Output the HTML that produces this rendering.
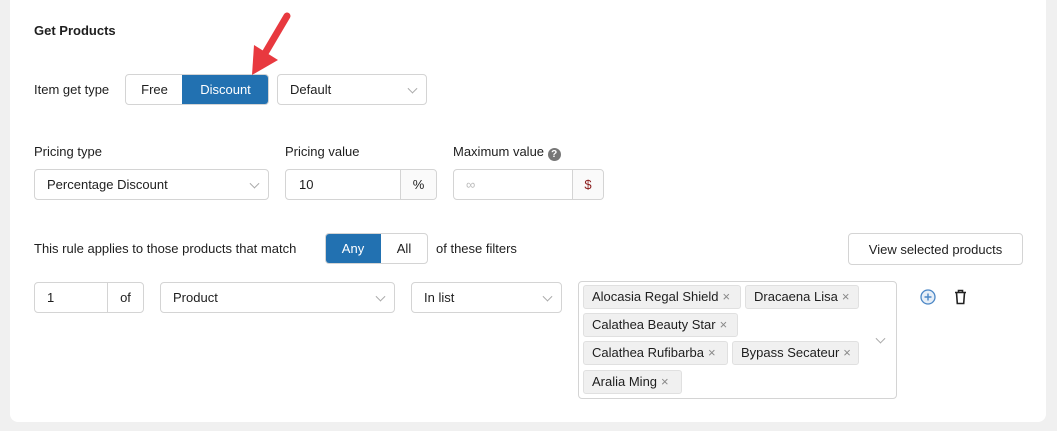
<!DOCTYPE html><html><head><style>
body{margin:0;width:1057px;height:431px;background:#f0f0f0;font-family:"Liberation Sans",sans-serif;font-size:13px;color:#1e1e1e;position:relative;overflow:hidden}
.p{position:absolute;left:10px;top:0;width:1036px;height:422px;background:#fff;border-radius:0 0 8px 8px}
.a{position:absolute}
.b{position:absolute;border:1px solid #d4d4d4;border-radius:4px;box-sizing:border-box;background:#fff;display:flex;align-items:center}
.chev{position:absolute;right:10px;top:50%;width:6px;height:6px;border-right:1px solid #aaa;border-bottom:1px solid #aaa;transform:translateY(-70%) rotate(45deg)}
.add{position:absolute;right:0;top:0;bottom:0;border-left:1px solid #d4d4d4;background:#fafafa;display:flex;align-items:center;justify-content:center;border-radius:0 4px 4px 0}
.tag{position:absolute;height:24px;background:#f0f0f0;border:1px solid #e0e0e0;border-radius:3px;box-sizing:border-box;padding:0 8px;line-height:22px;white-space:nowrap}
.tag span{color:#888;margin-left:4px}
</style></head><body>
<div class="p"></div>
<div class="a" style="left:34px;top:23px;font-weight:bold">Get Products</div>
<div class="a" style="left:34px;top:82px">Item get type</div>
<div class="b" style="left:125px;top:74px;width:144px;height:31px;overflow:hidden">
<div style="width:57px;text-align:center">Free</div>
<div style="position:absolute;left:56px;top:-1px;bottom:-1px;right:-1px;background:#2271b1;color:#fff;display:flex;align-items:center;justify-content:center">Discount</div></div>
<div class="b" style="left:277px;top:74px;width:150px;height:31px;padding-left:12px">Default<i class="chev"></i></div>
<div class="a" style="left:34px;top:144px">Pricing type</div>
<div class="a" style="left:285px;top:144px">Pricing value</div>
<div class="a" style="left:453px;top:144px">Maximum value <span style="display:inline-block;width:13px;height:13px;border-radius:50%;background:#777;color:#fff;font-size:10px;text-align:center;line-height:13px;font-weight:bold;vertical-align:-1px">?</span></div>
<div class="b" style="left:34px;top:169px;width:235px;height:31px;padding-left:12px">Percentage Discount<i class="chev"></i></div>
<div class="b" style="left:285px;top:169px;width:152px;height:31px;padding-left:13px">10<div class="add" style="width:35px">%</div></div>
<div class="b" style="left:453px;top:169px;width:151px;height:31px;padding-left:12px;color:#bbb">∞<div class="add" style="width:30px;color:#8a1c1c">$</div></div>
<div class="a" style="left:34px;top:241px">This rule applies to those products that match</div>
<div class="b" style="left:325px;top:233px;width:103px;height:31px;overflow:hidden">
<div style="position:absolute;left:-1px;top:-1px;bottom:-1px;width:56px;background:#2271b1;color:#fff;display:flex;align-items:center;justify-content:center">Any</div>
<div style="position:absolute;left:55px;right:0;text-align:center">All</div></div>
<div class="a" style="left:436px;top:241px">of these filters</div>
<div class="b" style="left:848px;top:233px;width:175px;height:32px;justify-content:center">View selected products</div>
<div class="b" style="left:34px;top:282px;width:110px;height:31px;padding-left:12px">1<div class="add" style="width:35px;background:#fff">of</div></div>
<div class="b" style="left:160px;top:282px;width:235px;height:31px;padding-left:12px">Product<i class="chev"></i></div>
<div class="b" style="left:411px;top:282px;width:151px;height:31px;padding-left:12px">In list<i class="chev"></i></div>
<div class="b" style="left:578px;top:281px;width:319px;height:118px"><i class="chev" style="right:12px"></i></div>
<div class="tag" style="left:583px;top:285px;width:158px">Alocasia Regal Shield<span>×</span></div>
<div class="tag" style="left:745px;top:285px;width:114px">Dracaena Lisa<span>×</span></div>
<div class="tag" style="left:583px;top:313px;width:155px">Calathea Beauty Star<span>×</span></div>
<div class="tag" style="left:583px;top:341px;width:145px">Calathea Rufibarba<span>×</span></div>
<div class="tag" style="left:732px;top:341px;width:127px">Bypass Secateur<span>×</span></div>
<div class="tag" style="left:583px;top:370px;width:99px">Aralia Ming<span>×</span></div>
<svg class="a" style="left:920px;top:289px" width="16" height="16" viewBox="0 0 16 16"><circle cx="8" cy="8" r="7" fill="#e6eef7" stroke="#4a86c5" stroke-width="1.3"/><path d="M8 4.5v7M4.5 8h7" stroke="#4a86c5" stroke-width="1.4"/></svg>
<svg class="a" style="left:953px;top:289px" width="15" height="16" viewBox="0 0 15 16"><path d="M2 3.5h11M5.5 3.5V1.5h4v2M3.5 3.5l.8 11h6.4l.8-11" fill="none" stroke="#222" stroke-width="1.6"/></svg>
<svg class="a" style="left:240px;top:8px" width="60" height="75" viewBox="240 8 60 75"><path d="M287 16 L264 55" stroke="#e8393f" stroke-width="7" stroke-linecap="round"/><path d="M252 75 L254 45 L278 60 Z" fill="#e8393f"/></svg>
</body></html>
